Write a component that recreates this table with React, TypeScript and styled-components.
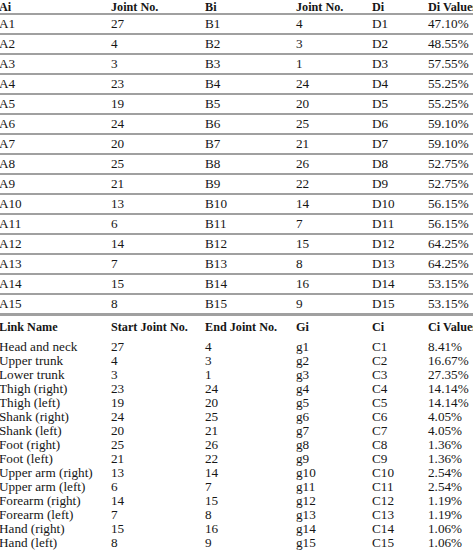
import React from 'react';
import styled, { createGlobalStyle } from 'styled-components';

const GlobalStyle = createGlobalStyle`
  html, body {
    margin: 0;
    padding: 0;
    background: #ffffff;
  }
  body {
    width: 474px;
    height: 550px;
    overflow: hidden;
    font-family: 'Liberation Serif', 'Times New Roman', serif;
    color: #161616;
  }
`;

const Page = styled.div`
  width: 474px;
  overflow: hidden;
  margin-left: -1px;
`;

const Row = styled.div<{ height: number; border?: number }>`
  display: grid;
  grid-template-columns: 112px 94px 91px 76px 56px 1fr;
  height: ${props => props.height}px;
  align-items: center;
  border-bottom: ${props => (props.border ? `${props.border}px solid #a0a0a0` : 'none')};
  box-sizing: content-box;
`;

const Cell = styled.div<{ bold?: boolean }>`
  font-size: ${props => (props.bold ? '12.2px' : '13.2px')};
  font-weight: ${props => (props.bold ? 700 : 400)};
  line-height: 14px;
  white-space: nowrap;
`;

const LinkHeader = styled(Row)`
  align-items: start;
  padding-top: 4px;
`;

const jointRows = [
  ['A1', '27', 'B1', '4', 'D1', '47.10%'],
  ['A2', '4', 'B2', '3', 'D2', '48.55%'],
  ['A3', '3', 'B3', '1', 'D3', '57.55%'],
  ['A4', '23', 'B4', '24', 'D4', '55.25%'],
  ['A5', '19', 'B5', '20', 'D5', '55.25%'],
  ['A6', '24', 'B6', '25', 'D6', '59.10%'],
  ['A7', '20', 'B7', '21', 'D7', '59.10%'],
  ['A8', '25', 'B8', '26', 'D8', '52.75%'],
  ['A9', '21', 'B9', '22', 'D9', '52.75%'],
  ['A10', '13', 'B10', '14', 'D10', '56.15%'],
  ['A11', '6', 'B11', '7', 'D11', '56.15%'],
  ['A12', '14', 'B12', '15', 'D12', '64.25%'],
  ['A13', '7', 'B13', '8', 'D13', '64.25%'],
  ['A14', '15', 'B14', '16', 'D14', '53.15%'],
  ['A15', '8', 'B15', '9', 'D15', '53.15%']
];

const linkRows = [
  ['Head and neck', '27', '4', 'g1', 'C1', '8.41%'],
  ['Upper trunk', '4', '3', 'g2', 'C2', '16.67%'],
  ['Lower trunk', '3', '1', 'g3', 'C3', '27.35%'],
  ['Thigh (right)', '23', '24', 'g4', 'C4', '14.14%'],
  ['Thigh (left)', '19', '20', 'g5', 'C5', '14.14%'],
  ['Shank (right)', '24', '25', 'g6', 'C6', '4.05%'],
  ['Shank (left)', '20', '21', 'g7', 'C7', '4.05%'],
  ['Foot (right)', '25', '26', 'g8', 'C8', '1.36%'],
  ['Foot (left)', '21', '22', 'g9', 'C9', '1.36%'],
  ['Upper arm (right)', '13', '14', 'g10', 'C10', '2.54%'],
  ['Upper arm (left)', '6', '7', 'g11', 'C11', '2.54%'],
  ['Forearm (right)', '14', '15', 'g12', 'C12', '1.19%'],
  ['Forearm (left)', '7', '8', 'g13', 'C13', '1.19%'],
  ['Hand (right)', '15', '16', 'g14', 'C14', '1.06%'],
  ['Hand (left)', '8', '9', 'g15', 'C15', '1.06%']
];

const renderCells = (cells: string[], bold?: boolean) =>
  cells.map((c, i) => (
    <Cell key={i} bold={bold}>
      {c}
    </Cell>
  ));

export default function App() {
  return (
    <>
      <GlobalStyle />
      <Page>
        <Row height={13} border={2}>
          {renderCells(['Ai', 'Joint No.', 'Bi', 'Joint No.', 'Di', 'Di Values'], true)}
        </Row>
        {jointRows.map((r, i) => (
          <Row key={r[0]} height={18} border={i === jointRows.length - 1 ? 3 : 2}>
            {renderCells(r)}
          </Row>
        ))}
        <LinkHeader height={20}>
          {renderCells(['Link Name', 'Start Joint No.', 'End Joint No.', 'Gi', 'Ci', 'Ci Values'], true)}
        </LinkHeader>
        {linkRows.map(r => (
          <Row key={r[0]} height={14}>
            {renderCells(r)}
          </Row>
        ))}
      </Page>
    </>
  );
}
